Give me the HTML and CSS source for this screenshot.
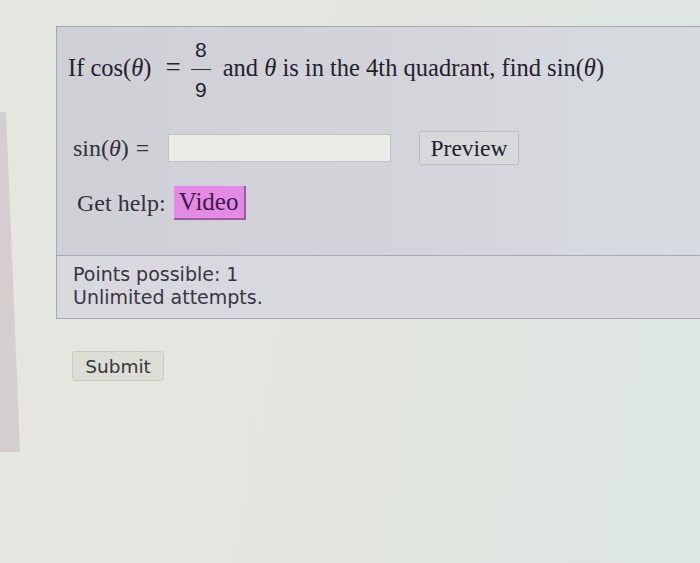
FILE: index.html
```html
<!DOCTYPE html>
<html>
<head>
<meta charset="utf-8">
<link rel="stylesheet" href="styles.css">
</head>
<body>
<div class="screen">
  <div class="strip"></div>
  <div class="content">
    <div class="panel">
      <div class="question">
        <p class="qline">If <span class="m">cos(<i>θ</i>)</span><span class="eq">=</span><span class="frac"><span class="num">8</span><span class="den">9</span></span>and <i>θ</i> is in the 4th quadrant, find <span class="m">sin(<i>θ</i>)</span></p>
        <div class="answer">
          <span class="m lbl">sin(<i>θ</i>)<span class="eq2">=</span></span>
          <span class="field"></span>
          <span class="btn preview">Preview</span>
        </div>
        <div class="help">
          <span>Get help:</span>
          <span class="video">Video</span>
        </div>
      </div>
      <div class="points">
        <div>Points possible: 1</div>
        <div>Unlimited attempts.</div>
      </div>
    </div>
    <div class="actions">
      <span class="submit">Submit</span>
    </div>
  </div>
</div>
</body>
</html>
```
FILE: styles.css
```css
html, body {
  margin: 0;
  padding: 0;
}
body {
  width: 700px;
  height: 563px;
  overflow: hidden;
  background: linear-gradient(100deg, #e6e6e1 0%, #e3e5de 45%, #dde6e2 100%);
  font-family: "Liberation Serif", "Times New Roman", serif;
  color: #24212b;
}
.screen {
  display: flex;
  height: 563px;
}
.strip {
  width: 20px;
  margin-top: 112px;
  height: 340px;
  background: #d4ced1;
  clip-path: polygon(0 0, 30% 0, 100% 100%, 0 100%);
  flex: none;
}
.content {
  flex: 1;
  padding-left: 36px;
  padding-top: 26px;
}
.panel {
  background: linear-gradient(90deg, #cfd0d5 0%, #d3d4da 50%, #d7dbe0 100%);
  border-top: 1px solid #a6a6b6;
  border-left: 1px solid #a6a6b6;
  border-bottom: 1px solid #a8a8ba;
}
.question {
  height: 228px;
  padding-left: 11px;
  box-sizing: border-box;
}
.qline {
  margin: 0;
  padding-top: 13px;
  font-size: 24.5px;
  line-height: 26px;
  white-space: nowrap;
}
.qline .m {
  font-size: 24.5px;
}
.eq {
  font-size: 27px;
  margin: 0 10px 0 14px;
}
.frac {
  display: inline-block;
  vertical-align: middle;
  text-align: center;
  font-family: "Liberation Sans", Arial, sans-serif;
  font-size: 21px;
  line-height: 20px;
  margin: 0 12px 0 0;
  width: 20px;
}
.num {
  display: block;
  border-bottom: 1.5px solid #333;
  padding-bottom: 9px;
}
.den {
  display: block;
  padding-top: 10px;
}
.answer {
  display: flex;
  align-items: center;
  margin-top: 28px;
  height: 40px;
  padding-left: 5px;
}
.lbl {
  width: 95px;
  font-size: 24px;
  color: #34303a;
}
.eq2 {
  margin-left: 7px;
}
.field {
  width: 221px;
  height: 26px;
  background: #ecebe5;
  border: 1px solid #c4c4c4;
}
.btn.preview {
  margin-left: 28px;
  width: 100px;
  height: 34px;
  box-sizing: border-box;
  display: flex;
  align-items: center;
  justify-content: center;
  background: #d8d9da;
  border: 1px solid #bcbcbc;
  border-radius: 2px;
  font-size: 23.5px;
  color: #22202a;
}
.help {
  display: flex;
  align-items: center;
  margin-top: 18px;
  padding-left: 9px;
  font-size: 24px;
  color: #34303a;
  gap: 8px;
}
.video {
  width: 72px;
  height: 34px;
  box-sizing: border-box;
  display: flex;
  align-items: center;
  justify-content: center;
  background: #e58ae4;
  border-right: 2px solid #9a5a9c;
  border-bottom: 2px solid #9a5a9c;
  color: #3a1a48;
  font-size: 25px;
}
.points {
  background: #d8d9df;
  border-top: 1px solid #a8a8bb;
  padding: 7px 0 9px 16px;
  font-family: "DejaVu Sans", Verdana, sans-serif;
  font-size: 19px;
  line-height: 23px;
  color: #3a3540;
}
.actions {
  padding-top: 32px;
  padding-left: 16px;
}
.submit {
  display: inline-flex;
  align-items: center;
  justify-content: center;
  width: 92px;
  height: 30px;
  box-sizing: border-box;
  background: #dcddd5;
  border: 1px solid #c9cac2;
  border-radius: 3px;
  font-family: "DejaVu Sans", Verdana, sans-serif;
  font-size: 18.5px;
  color: #3a3540;
}
```
